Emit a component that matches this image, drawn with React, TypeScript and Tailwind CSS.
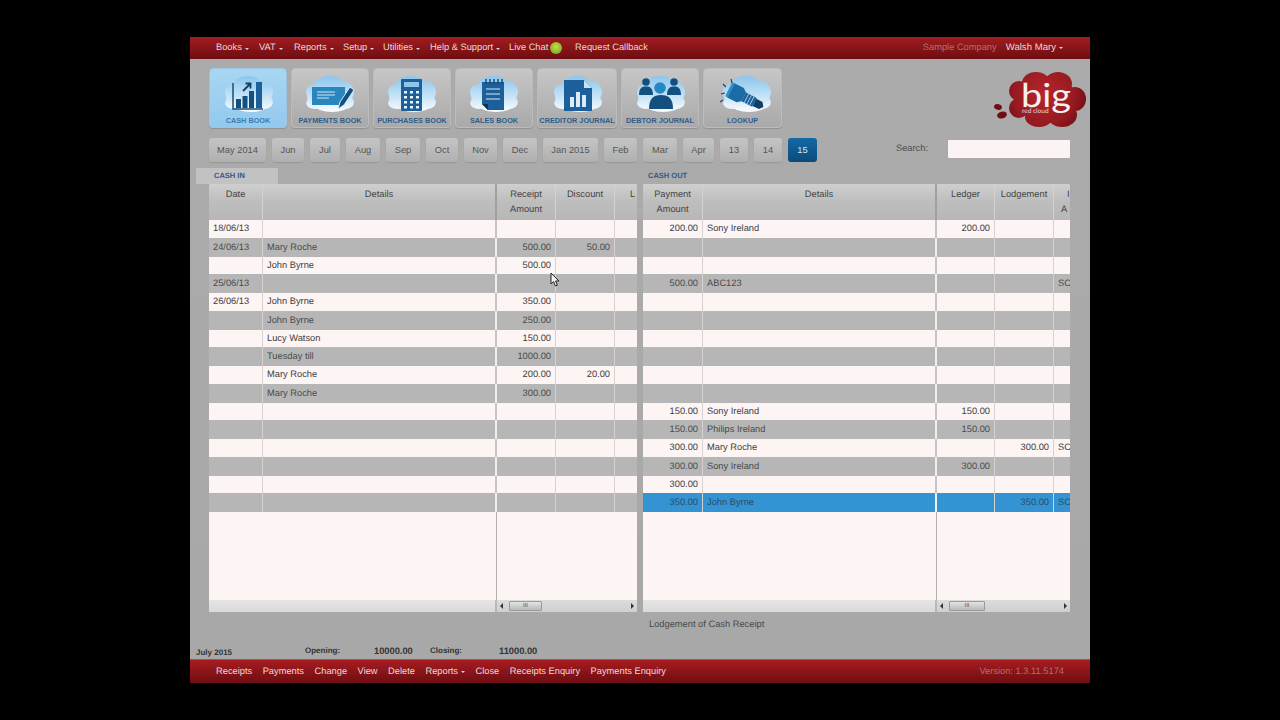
const NAVY = "#1c5f9a";
const DARK = "#14507f";

function Cloud({ x = 0 }: { x?: number }) {
  return (
    <g transform={`translate(${x} 0)`} fill="url(#cloudFill)">
      <ellipse cx="25" cy="10" rx="14" ry="8" />
      <ellipse cx="11" cy="18" rx="9" ry="8" />
      <ellipse cx="38" cy="18" rx="12" ry="11" />
      <ellipse cx="25" cy="22" rx="22" ry="15" />
      <ellipse cx="11" cy="29" rx="9" ry="6" />
      <ellipse cx="28" cy="32" rx="16" ry="6" />
      <ellipse cx="41" cy="28" rx="9" ry="7" />
    </g>
  );
}

function CashIcon() {
  return (
    <>
      <Cloud x={14} />
      <path d="M24 9V35H54" fill="none" stroke="#1b4f78" strokeWidth="1.5" />
      <rect x="27" y="25" width="5" height="9" fill={DARK} />
      <rect x="33.5" y="22" width="5" height="12" fill={DARK} />
      <rect x="40" y="17" width="5" height="17" fill={DARK} />
      <rect x="47" y="8" width="6" height="26" fill={NAVY} />
      <path d="M34 17L41 10M36.5 9.5H41.5V14.5" fill="none" stroke="#123f66" strokeWidth="1.8" />
    </>
  );
}

function PaymentsIcon() {
  return (
    <>
      <Cloud x={13} />
      <rect x="21" y="13" width="33" height="18" fill="#2a86bd" />
      <path d="M26 18H44M26 21H44M26 24H38" stroke="#cfe7f5" strokeWidth="1" />
      <path d="M47 35L49 28L59 13L63 16L53 31Z" fill={DARK} stroke="#d9edf9" strokeWidth="1" />
    </>
  );
}

function PurchasesIcon() {
  return (
    <>
      <Cloud x={13} />
      <rect x="28" y="5" width="21" height="32" rx="1" fill={NAVY} />
      <rect x="31" y="8" width="15" height="5" fill="#8fc5e6" />
      <path d="M31 17h3v2.5h-3zM37 17h3v2.5h-3zM43 17h3v2.5h-3zM31 22h3v2.5h-3zM37 22h3v2.5h-3zM43 22h3v2.5h-3zM31 27h3v2.5h-3zM37 27h3v2.5h-3zM43 27h3v2.5h-3zM31 32h3v2.5h-3zM37 32h3v2.5h-3zM43 32h3v2.5h-3z" fill="#e8f3fa" />
    </>
  );
}

function SalesIcon() {
  return (
    <>
      <Cloud x={13} />
      <path d="M27 8H49V36H33L27 30Z" fill={NAVY} />
      <path d="M27 30H33V36Z" fill="#10324f" />
      <path d="M31 5V10M35 5V10M39 5V10M43 5V10M47 5V10" stroke="#12466f" strokeWidth="1.4" />
      <path d="M31 15H45M31 20H45M31 25H45" stroke="#d5e9f6" strokeWidth="1.2" />
    </>
  );
}

function CreditorIcon() {
  return (
    <>
      <Cloud x={14} />
      <path d="M26 6H46L54 14V37H26Z" fill={NAVY} />
      <path d="M46 6L54 14H46Z" fill="#c8e0f0" />
      <rect x="32" y="23" width="4" height="10" fill="#dcecf7" />
      <rect x="38" y="18" width="4" height="15" fill="#dcecf7" />
      <rect x="44" y="21" width="4" height="12" fill="#dcecf7" />
    </>
  );
}

function DebtorIcon() {
  return (
    <>
      <Cloud x={14} />
      <circle cx="25" cy="8" r="3.8" fill={DARK} />
      <circle cx="53" cy="8" r="3.8" fill={DARK} />
      <path d="M18 21C18 14 21 12.5 25 12.5C29 12.5 32 14 32 21Z" fill={DARK} />
      <path d="M46 21C46 14 49 12.5 53 12.5C57 12.5 60 14 60 21Z" fill={DARK} />
      <circle cx="39" cy="14" r="5.8" fill="#2388c4" />
      <path d="M28 35C28 25 32 21 40 21C48 21 52 25 52 35Z" fill={DARK} />
    </>
  );
}

function LookupIcon() {
  return (
    <>
      <Cloud x={17} />
      <g transform="rotate(27 38 22)">
        <rect x="23" y="14" width="4" height="16" rx="1.5" fill="#2f8fca" />
        <path d="M26 14H36L40 17V27L36 30H26Z" fill="#1a6ba6" />
        <rect x="40" y="17" width="12" height="10" fill={NAVY} />
        <path d="M43 17V27M46 17V27M49 17V27" stroke="#9cc9e6" strokeWidth="0.9" />
        <path d="M52 18H59L62 22L59 26H52Z" fill="#123f66" />
      </g>
      <path d="M21 19L17 20M22 13L19 10M28 9L27 5M19 26L16 28" stroke="#17446b" strokeWidth="1.1" />
    </>
  );
}

const tools = [
  { label: "Cash Book", w: "w-[78px]", icon: <CashIcon />, active: true },
  { label: "Payments Book", w: "w-[78px]", icon: <PaymentsIcon /> },
  { label: "Purchases Book", w: "w-[78px]", icon: <PurchasesIcon /> },
  { label: "Sales Book", w: "w-[78px]", icon: <SalesIcon /> },
  { label: "Creditor Journal", w: "w-[80px]", icon: <CreditorIcon /> },
  { label: "Debtor Journal", w: "w-[78px]", icon: <DebtorIcon /> },
  { label: "Lookup", w: "w-[79px]", icon: <LookupIcon /> },
];

const months = [
  ["May 2014", "w-[57px]"],
  ["Jun", "w-[32px]"],
  ["Jul", "w-[30px]"],
  ["Aug", "w-[34px]"],
  ["Sep", "w-[34px]"],
  ["Oct", "w-[32px]"],
  ["Nov", "w-[33px]"],
  ["Dec", "w-[34px]"],
  ["Jan 2015", "w-[55px]"],
  ["Feb", "w-[33px]"],
  ["Mar", "w-[34px]"],
  ["Apr", "w-[31px]"],
  ["13", "w-[28px]"],
  ["14", "w-[28px]"],
  ["15", "w-[29px]"],
];

const cashIn = [
  ["18/06/13", "", "", ""],
  ["24/06/13", "Mary Roche", "500.00", "50.00"],
  ["", "John Byrne", "500.00", ""],
  ["25/06/13", "", "", ""],
  ["26/06/13", "John Byrne", "350.00", ""],
  ["", "John Byrne", "250.00", ""],
  ["", "Lucy Watson", "150.00", ""],
  ["", "Tuesday till", "1000.00", ""],
  ["", "Mary Roche", "200.00", "20.00"],
  ["", "Mary Roche", "300.00", ""],
  ["", "", "", ""],
  ["", "", "", ""],
  ["", "", "", ""],
  ["", "", "", ""],
  ["", "", "", ""],
  ["", "", "", ""],
];

const cashOut = [
  ["200.00", "Sony Ireland", "200.00", "", ""],
  ["", "", "", "", ""],
  ["", "", "", "", ""],
  ["500.00", "ABC123", "", "", "SC"],
  ["", "", "", "", ""],
  ["", "", "", "", ""],
  ["", "", "", "", ""],
  ["", "", "", "", ""],
  ["", "", "", "", ""],
  ["", "", "", "", ""],
  ["150.00", "Sony Ireland", "150.00", "", ""],
  ["150.00", "Philips Ireland", "150.00", "", ""],
  ["300.00", "Mary Roche", "", "300.00", "SC"],
  ["300.00", "Sony Ireland", "300.00", "", ""],
  ["300.00", "", "", "", ""],
  ["350.00", "John Byrne", "", "350.00", "SC"],
];

function NavItem({ label, caret }: { label: string; caret?: boolean }) {
  return (
    <span className="flex items-center gap-[3px]">
      {label}
      {caret && <span className="mt-[1px] border-x-[2px] border-t-[2px] border-x-transparent border-t-[#e6d5d5]" />}
    </span>
  );
}

function Scrollbar({ thumb }: { thumb: string }) {
  return (
    <div className="flex h-full flex-1 items-center bg-gradient-to-b from-[#dcdcdc] to-[#cfcfcf] px-[3px]">
      <span className="border-y-[3px] border-r-[3px] border-y-transparent border-r-[#333]" />
      <span className={`${thumb} ml-[6px] flex h-[10px] items-center justify-center rounded-[1px] border border-[#9a9a9a] bg-gradient-to-b from-[#e4e4e4] to-[#b9b9b9] text-[6px] leading-none text-[#555]`}>
        III
      </span>
      <span className="ml-auto border-y-[3px] border-l-[3px] border-y-transparent border-l-[#333]" />
    </div>
  );
}

function HeaderCell({ w, children, border = true }: { w: string; children: React.ReactNode; border?: boolean }) {
  return (
    <div className={`${w} h-full shrink-0 overflow-hidden whitespace-nowrap pt-[3px] text-center leading-[15px] ${border ? "border-r border-[#d2d2d2]" : ""}`}>
      {children}
    </div>
  );
}

function Cell({ w, right, last, children }: { w: string; right?: boolean; last?: boolean; children?: React.ReactNode }) {
  return (
    <div className={`${w} flex h-full shrink-0 items-center overflow-hidden whitespace-nowrap pt-[1px] ${right ? "justify-end pr-[4px]" : "pl-[4px]"} ${last ? "" : "border-r border-[#d6d0d0]"}`}>
      {children}
    </div>
  );
}

function rowClass(i: number, selected: boolean) {
  if (selected) return "h-[19px] bg-[#3393d3] text-[#2b4d68]";
  return i % 2 === 0 ? "h-[17.5px] bg-[#fdf4f4] text-[#3d3d3d]" : "h-[19px] bg-[#b6b6b6] text-[#4a4a4a]";
}

function CashInTable() {
  return (
    <div className="relative flex h-full w-[428px] flex-col overflow-hidden rounded-t-[3px] bg-[#fdf4f4] text-[9.3px] text-[#444]">
      <div className="flex h-[36px] shrink-0 bg-gradient-to-b from-[#cfcfcf] via-[#bdbdbd] to-[#b7b7b7]">
        <HeaderCell w="w-[54px]">Date</HeaderCell>
        <HeaderCell w="w-[232px]" border={false}>Details</HeaderCell>
        <div className="h-full w-[2px] shrink-0 bg-[#a0a0a0]" />
        <HeaderCell w="w-[59px]">Receipt<br />Amount</HeaderCell>
        <HeaderCell w="w-[59px]">Discount</HeaderCell>
        <div className="h-full w-[22px] shrink-0 pl-[15px] pt-[3px] leading-[15px]">L</div>
      </div>
      {cashIn.map((r, i) => (
        <div key={i} className={`flex shrink-0 ${rowClass(i, false)}`}>
          <Cell w="w-[54px]">{r[0]}</Cell>
          <Cell w="w-[232px]" last>{r[1]}</Cell>
          <div className={`h-full w-[2px] shrink-0 ${i % 2 === 0 ? "bg-[#c4c4c4]" : "bg-[#f2eeee]"}`} />
          <Cell w="w-[59px]" right>{r[2]}</Cell>
          <Cell w="w-[59px]" right>{r[3]}</Cell>
          <Cell w="w-[22px]" last />
        </div>
      ))}
      <div className="flex min-h-0 flex-1">
        <div className="w-[286px] shrink-0" />
        <div className="w-[2px] shrink-0 border-r border-[#b0b0b0]" />
      </div>
      <div className="flex h-[12px] shrink-0">
        <div className="w-[286px] shrink-0 bg-gradient-to-b from-[#e6e4e4] to-[#dadada]" />
        <div className="w-[2px] shrink-0 bg-[#b8b8b8]" />
        <Scrollbar thumb="w-[33px]" />
      </div>
      {/* mouse pointer from the recording */}
      <svg className="absolute left-[341px] top-[88px]" width="11" height="15" viewBox="0 0 11 15">
        <path d="M1 1V12L3.6 9.6L5.4 14L7.4 13.2L5.6 9H9Z" fill="#f4f4f4" stroke="#222" strokeWidth="1" />
      </svg>
    </div>
  );
}

function CashOutTable() {
  return (
    <div className="flex h-full w-[427px] flex-col overflow-hidden rounded-t-[3px] bg-[#fdf4f4] text-[9.3px] text-[#444]">
      <div className="flex h-[36px] shrink-0 bg-gradient-to-b from-[#cfcfcf] via-[#bdbdbd] to-[#b7b7b7]">
        <HeaderCell w="w-[60px]">Payment<br />Amount</HeaderCell>
        <HeaderCell w="w-[232px]" border={false}>Details</HeaderCell>
        <div className="h-full w-[2px] shrink-0 bg-[#a0a0a0]" />
        <HeaderCell w="w-[58px]">Ledger</HeaderCell>
        <HeaderCell w="w-[59px]">Lodgement</HeaderCell>
        <div className="h-full w-[16px] shrink-0 pl-[7px] pt-[3px] leading-[15px]">
          <span className="pl-[6px]">I</span>
          <br />
          A
        </div>
      </div>
      {cashOut.map((r, i) => {
        const selected = i === 15;
        return (
          <div key={i} className={`flex shrink-0 ${rowClass(i, selected)}`}>
            <Cell w="w-[60px]" right>{r[0]}</Cell>
            <Cell w="w-[232px]" last>{r[1]}</Cell>
            <div className={`h-full w-[2px] shrink-0 ${i % 2 === 0 ? "bg-[#c4c4c4]" : "bg-[#f2eeee]"}`} />
            <Cell w="w-[58px]" right>{r[2]}</Cell>
            <Cell w="w-[59px]" right>{r[3]}</Cell>
            <Cell w="w-[16px]" last>{r[4]}</Cell>
          </div>
        );
      })}
      <div className="flex min-h-0 flex-1">
        <div className="w-[292px] shrink-0" />
        <div className="w-[2px] shrink-0 border-r border-[#b0b0b0]" />
      </div>
      <div className="flex h-[12px] shrink-0">
        <div className="w-[292px] shrink-0 bg-gradient-to-b from-[#e6e4e4] to-[#dadada]" />
        <div className="w-[2px] shrink-0 bg-[#b8b8b8]" />
        <Scrollbar thumb="w-[36px]" />
      </div>
    </div>
  );
}

function Logo() {
  return (
    <svg width="96" height="60" viewBox="0 0 96 60" className="mr-[2px] mt-[2px]">
      <defs>
        <radialGradient id="logoFill" gradientUnits="userSpaceOnUse" cx="52" cy="24" r="44">
          <stop offset="0%" stopColor="#b5262c" />
          <stop offset="70%" stopColor="#961a20" />
          <stop offset="100%" stopColor="#6f0f14" />
        </radialGradient>
      </defs>
      <g fill="url(#logoFill)">
        <ellipse cx="27" cy="21" rx="10" ry="10" />
        <ellipse cx="44" cy="13" rx="14" ry="11" />
        <ellipse cx="66" cy="14" rx="14" ry="12" />
        <ellipse cx="83" cy="29" rx="11" ry="12" />
        <ellipse cx="70" cy="45" rx="15" ry="12" />
        <ellipse cx="47" cy="47" rx="14" ry="10" />
        <ellipse cx="27" cy="38" rx="10" ry="10" />
        <ellipse cx="54" cy="29" rx="32" ry="21" />
        <ellipse cx="6" cy="37" rx="4" ry="2.8" transform="rotate(15 6 37)" />
        <ellipse cx="10" cy="45" rx="5" ry="3.4" transform="rotate(-15 10 45)" />
      </g>
      <text x="29" y="37" fontSize="33" fill="#f8f1f1" fontFamily="Lato, 'Open Sans', sans-serif" textLength="50" lengthAdjust="spacingAndGlyphs">big</text>
      <text x="30" y="43" fontSize="6.5" fill="#eddcdc" fontFamily="Lato, sans-serif">red cloud</text>
    </svg>
  );
}

export default function App() {
  return (
    <div className="min-h-screen bg-black pt-[37px] [font-family:'Liberation_Sans',Arial,sans-serif] [text-rendering:geometricPrecision]">
      <div className="mx-auto flex h-[646px] w-[900px] flex-col">
        {/* Top bar */}
        <nav className="flex h-[22px] shrink-0 items-center justify-between bg-gradient-to-b from-[#a21c20] to-[#6e0e12] pl-[26px] pr-[27px] text-[9.3px] text-[#ead9d9]">
          <div className="flex items-center">
            <span className="w-[43px]"><NavItem label="Books" caret /></span>
            <span className="w-[35px]"><NavItem label="VAT" caret /></span>
            <span className="w-[49px]"><NavItem label="Reports" caret /></span>
            <span className="w-[40px]"><NavItem label="Setup" caret /></span>
            <span className="w-[47px]"><NavItem label="Utilities" caret /></span>
            <span className="w-[79px]"><NavItem label="Help & Support" caret /></span>
            <span className="flex w-[66px] items-center gap-[2px]">
              Live Chat
              <span className="size-[12px] rounded-full bg-[radial-gradient(circle_at_50%_40%,#c4e04a,#6f9a1c)]" />
            </span>
            <span>Request Callback</span>
          </div>
          <div className="flex items-center gap-[9px]">
            <span className="text-[#b96d6d]">Sample Company</span>
            <span className="text-[9.6px]"><NavItem label="Walsh Mary" caret /></span>
          </div>
        </nav>

        {/* Main */}
        <main className="flex min-h-0 flex-1 flex-col bg-gradient-to-b from-[#ababab] to-[#a8a8a8]">
          <div className="flex h-[69px] shrink-0 items-start justify-between pl-[19px] pt-[9px]">
            <div className="flex gap-[4px]">
              {tools.map((t) => (
                <button
                  key={t.label}
                  className={`${t.w} flex h-[60px] flex-col items-center rounded-[4px] border pt-[5px] shadow-[0_1px_1px_rgba(0,0,0,0.15)] ${
                    t.active
                      ? "border-[#9cc6e2] bg-gradient-to-b from-[#a9d6f2] to-[#93c9ee]"
                      : "border-[#bcbcbc] bg-gradient-to-b from-[#c6c6c6] to-[#a9a9a9]"
                  }`}
                >
                  <svg width="78" height="41" viewBox="0 0 78 41" className="shrink-0">
                    <defs>
                      <linearGradient id="cloudFill" gradientUnits="userSpaceOnUse" x1="0" y1="2" x2="0" y2="38">
                        <stop offset="0%" stopColor="#8ac6ee" />
                        <stop offset="55%" stopColor="#c3e2f6" />
                        <stop offset="100%" stopColor="#fbfdff" />
                      </linearGradient>
                    </defs>
                    {t.icon}
                  </svg>
                  <span className={`whitespace-nowrap text-[7.3px] font-bold uppercase leading-[11px] ${t.active ? "text-[#3a7cb4]" : "text-[#2f5d8c]"}`}>
                    {t.label}
                  </span>
                </button>
              ))}
            </div>
            <Logo />
          </div>

          <div className="mt-[10px] flex h-[24px] shrink-0 items-center justify-between pl-[19px] pr-[20px]">
            <div className="flex gap-[6px]">
              {months.map(([m, w]) => (
                <button
                  key={m}
                  className={`${w} h-[24px] rounded-[3px] pt-[1px] text-[9.3px] ${
                    m === "15"
                      ? "bg-gradient-to-b from-[#136aa6] to-[#0c4a7c] text-[#d5e6f2]"
                      : "bg-gradient-to-b from-[#c4c4c4] to-[#b0b0b0] text-[#555] shadow-[0_1px_1px_rgba(0,0,0,0.12)]"
                  }`}
                >
                  {m}
                </button>
              ))}
            </div>
            <div className="flex items-center gap-[20px]">
              <span className="-mt-[2px] text-[9.3px] text-[#4f4f4f]">Search:</span>
              <div className="-mt-[2px] h-[18px] w-[122px] rounded-[1px] bg-[#fcf4f4]" />
            </div>
          </div>

          <div className="mt-[6px] flex h-[16px] shrink-0 items-center pl-[6px] text-[7.5px] font-bold uppercase text-[#2c5a8c]">
            <div className="flex h-full w-[82px] items-center bg-[#c2c2c2] pl-[18px]">Cash In</div>
            <div className="pl-[370px]">Cash Out</div>
          </div>

          <div className="flex h-[428px] shrink-0 gap-[6px] pl-[19px]">
            <CashInTable />
            <CashOutTable />
          </div>

          <div className="pl-[459px] pt-[6px] text-[9.3px] leading-[12px] text-[#4a4a4a]">Lodgement of Cash Receipt</div>

          <div className="mt-auto flex h-[20px] shrink-0 items-start pl-[6px] font-bold text-[#333]">
            <span className="mt-[8px] w-[109px] text-[8px]">July 2015</span>
            <span className="mt-[6px] w-[69px] text-[8px]">Opening:</span>
            <span className="mt-[6px] w-[56px] text-[9.3px]">10000.00</span>
            <span className="mt-[6px] w-[69px] text-[8px]">Closing:</span>
            <span className="mt-[6px] text-[9.3px]">11000.00</span>
          </div>
        </main>

        {/* Bottom bar */}
        <footer className="flex h-[24px] shrink-0 items-center justify-between border-t border-[#c0444a] bg-gradient-to-b from-[#a81c20] to-[#6e0e12] pl-[26px] pr-[26px] text-[9.3px] text-[#ead9d9]">
          <div className="flex items-center gap-[10.5px]">
            <span>Receipts</span>
            <span>Payments</span>
            <span>Change</span>
            <span>View</span>
            <span>Delete</span>
            <NavItem label="Reports" caret />
            <span>Close</span>
            <span>Receipts Enquiry</span>
            <span>Payments Enquiry</span>
          </div>
          <span className="text-[#b96d6d]">Version: 1.3.11.5174</span>
        </footer>
      </div>
    </div>
  );
}
